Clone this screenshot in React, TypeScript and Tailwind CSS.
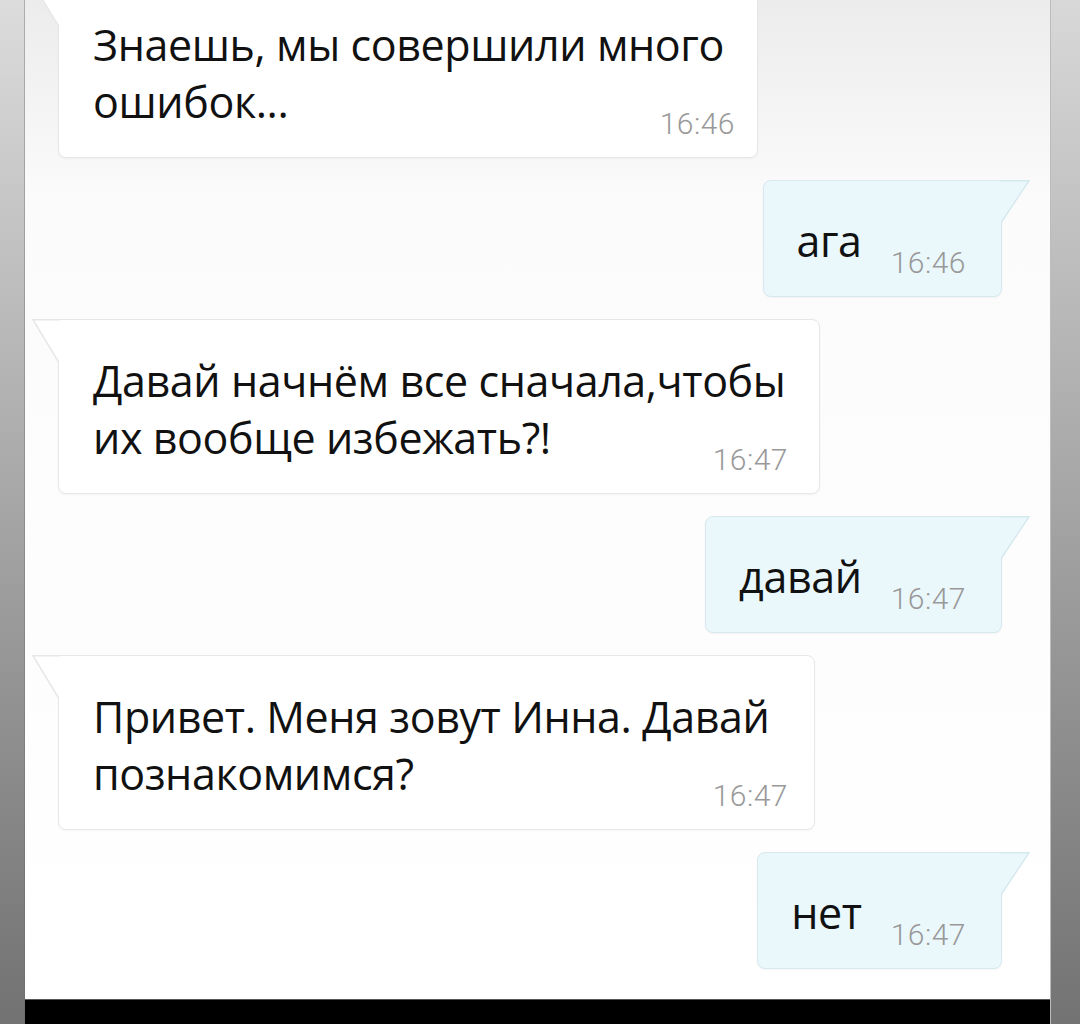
import React from "react";

type Incoming = { kind: "in"; lines: [string, string]; time: string; width: number; pr: number; first?: boolean };
type Outgoing = { kind: "out"; text: string; time: string; width: number };
type Msg = Incoming | Outgoing;

const messages: Msg[] = [
  { kind: "in", lines: ["Знаешь, мы совершили много", "ошибок..."], time: "16:46", width: 700, pr: 22, first: true },
  { kind: "out", text: "ага", time: "16:46", width: 239 },
  { kind: "in", lines: ["Давай начнём все сначала,чтобы", "их вообще избежать?!"], time: "16:47", width: 762, pr: 31 },
  { kind: "out", text: "давай", time: "16:47", width: 297 },
  { kind: "in", lines: ["Привет. Меня зовут Инна. Давай", "познакомимся?"], time: "16:47", width: 757, pr: 26 },
  { kind: "out", text: "нет", time: "16:47", width: 245 },
];

const textFont = "font-['Open_Sans','Noto_Sans',sans-serif] text-[43px] leading-[57px] tracking-[-0.4px] text-[#111111]";
const timeFont = "font-['Roboto','Liberation_Sans',sans-serif]";

function Time({ value }: { value: string }) {
  return (
    <span
      className={`${timeFont} font-light text-[30px] leading-[32px] text-[#999999] tracking-[0.5px] mb-[-10px] shrink-0`}
    >
      {value}
    </span>
  );
}

function IncomingBubble({ m }: { m: Incoming }) {
  return (
    <div
      className={`relative self-start ml-[33px] bg-white border-[1.5px] border-[#e7e7e7] rounded-[8px] rounded-tl-none shadow-[0_1px_2px_rgba(0,0,0,0.04)] pl-[34px] pt-[32px] pb-[27px] ${
        m.first ? "mt-[-17px]" : ""
      }`}
      style={{ width: m.width, paddingRight: m.pr }}
    >
      {/* tail on the upper left corner */}
      <svg
        className="absolute top-[-1.5px] left-[-27px]"
        width="28"
        height="44"
        viewBox="0 0 28 44"
      >
        <polygon points="28,0 1,0 26.5,43 28,43" fill="#ffffff" />
        <polyline points="28,0.75 1,0.75 26.5,43" fill="none" stroke="#e7e7e7" strokeWidth="1.5" />
      </svg>
      <div className={`${textFont} whitespace-nowrap`}>
        <div>{m.lines[0]}</div>
        <div className="flex items-end justify-between">
          <span>{m.lines[1]}</span>
          <Time value={m.time} />
        </div>
      </div>
    </div>
  );
}

function OutgoingBubble({ m }: { m: Outgoing }) {
  return (
    <div
      className="relative self-end mr-[48px] bg-[#eaf8fc] border-[1.5px] border-[#d6e9ef] rounded-[8px] rounded-tr-none shadow-[0_1px_2px_rgba(0,0,0,0.04)] pr-[35px] pt-[31px] pb-[27px] flex items-end justify-end gap-[29px]"
      style={{ width: m.width }}
    >
      {/* tail on the upper right corner */}
      <svg
        className="absolute top-[-1.5px] right-[-29px]"
        width="30"
        height="44"
        viewBox="0 0 30 44"
      >
        <polygon points="0,0 29,0 1.5,42 0,42" fill="#eaf8fc" />
        <polyline points="0,0.75 29,0.75 1.5,42" fill="none" stroke="#d6e9ef" strokeWidth="1.5" />
      </svg>
      <span className={`${textFont} whitespace-nowrap`}>{m.text}</span>
      <Time value={m.time} />
    </div>
  );
}

export default function App() {
  return (
    <div className="w-[1080px] h-[1024px] flex overflow-hidden bg-white">
      <div className="w-[25px] h-full bg-gradient-to-b from-[#dcdcdc] to-[#727272] border-r border-[#6a6a6a]/40" />
      <div className="flex-1 flex flex-col h-full">
        <div className="flex-1 overflow-hidden bg-gradient-to-b from-[#ececec] via-[#fbfbfb] via-[20%] to-[#ffffff]">
          <div className="flex flex-col gap-[22px]">
            {messages.map((m, i) =>
              m.kind === "in" ? <IncomingBubble key={i} m={m} /> : <OutgoingBubble key={i} m={m} />
            )}
          </div>
        </div>
        <div className="h-[25px] bg-black border-t border-[#555]" />
      </div>
      <div className="w-[30px] h-full bg-gradient-to-b from-[#d8d8d8] to-[#737373] border-l border-[#bcbcbc]" />
    </div>
  );
}
